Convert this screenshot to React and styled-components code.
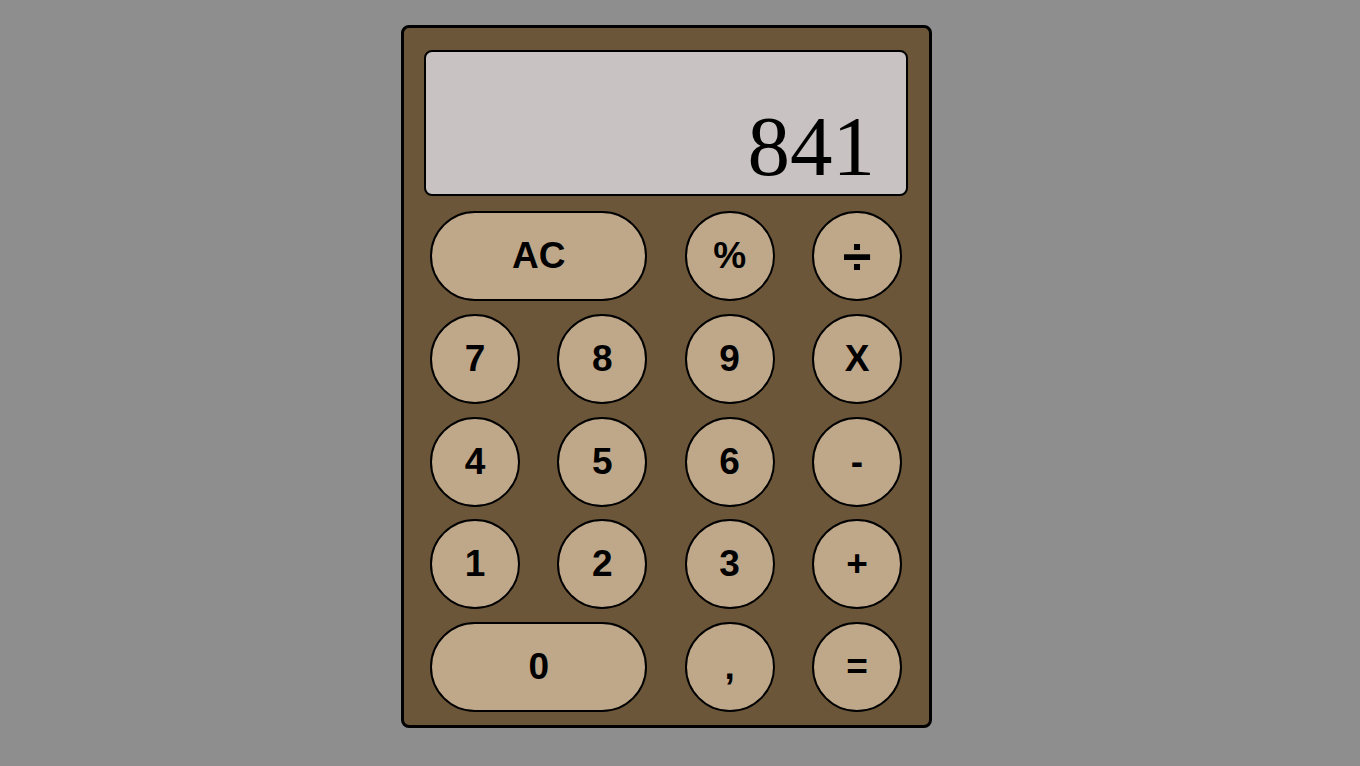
import styled, { createGlobalStyle } from 'styled-components'

const keys = [
  { label: 'AC', wide: true },
  { label: '%' },
  { label: '÷', big: true },
  { label: '7' },
  { label: '8' },
  { label: '9' },
  { label: 'X' },
  { label: '4' },
  { label: '5' },
  { label: '6' },
  { label: '-' },
  { label: '1' },
  { label: '2' },
  { label: '3' },
  { label: '+' },
  { label: '0', wide: true },
  { label: ',' },
  { label: '=' },
]

const App = () => {
  return (
    <>
      <Global />
      <Calculator>
        <Display>841</Display>
        <Keys>
          {keys.map((k) => (
            <Key key={k.label} $wide={k.wide} $big={k.big}>
              {k.label}
            </Key>
          ))}
        </Keys>
      </Calculator>
    </>
  )
}

const Global = createGlobalStyle`
  html, body {
    margin: 0;
    padding: 0;
    background: #8e8e8e;
  }
  body {
    font-family: "Liberation Sans", Arial, sans-serif;
  }
`

const Calculator = styled.div`
  box-sizing: border-box;
  width: 531px;
  margin: 25px 0 0 calc(50% - 279px);
  padding: 22px 21px 13px 20px;
  background: #6b5639;
  border: 3px solid #000;
  border-radius: 8px;
  display: flex;
  flex-direction: column;
`

const Display = styled.div`
  box-sizing: border-box;
  height: 146px;
  padding: 0 31px 5px 0;
  background: #c8c2c2;
  border: 2px solid #000;
  border-radius: 8px;
  display: flex;
  align-items: flex-end;
  justify-content: flex-end;
  font-family: "Liberation Serif", "Times New Roman", serif;
  font-size: 85px;
  line-height: 1;
  color: #000;
`

const Keys = styled.div`
  display: grid;
  grid-template-columns: repeat(4, 90px);
  justify-content: space-between;
  row-gap: 12.75px;
  margin: 15px 6px 0;
`

const Key = styled.button`
  box-sizing: border-box;
  grid-column: ${(p) => (p.$wide ? 'span 2' : 'span 1')};
  height: 90px;
  padding: 0;
  background: #bfa88a;
  border: 2px solid #000;
  border-radius: 45px;
  font-family: "Liberation Sans", Arial, sans-serif;
  font-weight: bold;
  font-size: ${(p) => (p.$big ? '52px' : '37px')};
  color: #000;
  display: flex;
  align-items: center;
  justify-content: center;
  cursor: pointer;
`

export default App
